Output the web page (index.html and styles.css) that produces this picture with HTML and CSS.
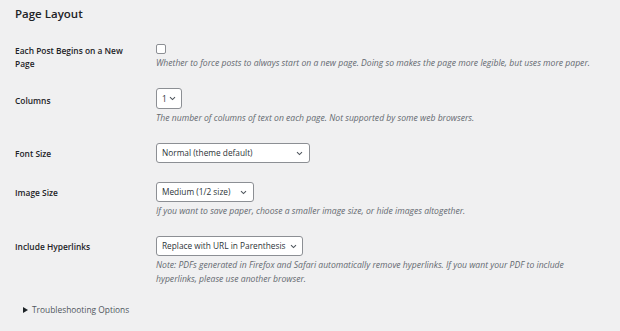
FILE: index.html
```
<!DOCTYPE html>
<html lang="en">
<head>
  <meta charset="UTF-8">
  <title>Page Layout</title>
  <link rel="stylesheet" href="styles.css">
</head>
<body>

  <h2 class="section-title">Page Layout</h2>

  <div class="form-table">
    <div class="row">
      <div class="label">Each Post Begins on a New Page</div>
      <div class="field">
        <span class="checkbox"></span>
        <p class="desc">Whether to force posts to always start on a new page. Doing so makes the page more legible, but uses more paper.</p>
      </div>
    </div>

    <div class="row columns-row">
      <div class="label">Columns</div>
      <div class="field">
        <div class="select sel-columns">
          <span>1</span>
          <svg width="7" height="5" viewBox="0 0 7 5"><path d="M1 1.2 L3.5 3.6 L6 1.2" fill="none" stroke="#50575e" stroke-width="1.1"/></svg>
        </div>
        <p class="desc">The number of columns of text on each page. Not supported by some web browsers.</p>
      </div>
    </div>

    <div class="row font-row">
      <div class="label">Font Size</div>
      <div class="field">
        <div class="select sel-font">
          <span>Normal (theme default)</span>
          <svg width="7" height="5" viewBox="0 0 7 5"><path d="M1 1.2 L3.5 3.6 L6 1.2" fill="none" stroke="#50575e" stroke-width="1.1"/></svg>
        </div>
      </div>
    </div>

    <div class="row">
      <div class="label">Image Size</div>
      <div class="field">
        <div class="select sel-image">
          <span>Medium (1/2 size)</span>
          <svg width="7" height="5" viewBox="0 0 7 5"><path d="M1 1.2 L3.5 3.6 L6 1.2" fill="none" stroke="#50575e" stroke-width="1.1"/></svg>
        </div>
        <p class="desc">If you want to save paper, choose a smaller image size, or hide images altogether.</p>
      </div>
    </div>

    <div class="row">
      <div class="label">Include Hyperlinks</div>
      <div class="field">
        <div class="select sel-links">
          <span>Replace with URL in Parenthesis</span>
          <svg width="7" height="5" viewBox="0 0 7 5"><path d="M1 1.2 L3.5 3.6 L6 1.2" fill="none" stroke="#50575e" stroke-width="1.1"/></svg>
        </div>
        <p class="desc narrow">Note: PDFs generated in Firefox and Safari automatically remove hyperlinks. If you want your PDF to include hyperlinks, please use another browser.</p>
      </div>
    </div>
  </div>

  <div class="details">
    <span class="arrow"></span>
    <span>Troubleshooting Options</span>
  </div>

</body>
</html>
```

FILE: styles.css
```
body {
  margin: 0;
  padding: 0 15px;
  background: #f0f0f1;
  font-family: "Open Sans", "Noto Sans", sans-serif;
  color: #1d2327;
  font-size: 8.4px;
  width: 590px;
  height: 331px;
  overflow: hidden;
}
.section-title {
  font-size: 11.5px;
  font-weight: 600;
  margin: 0;
  padding-top: 5px;
  line-height: 18px;
}
.form-table {
  margin-top: 12px;
}
.row {
  display: flex;
  padding: 9px 0;
}
.font-row {
  padding-bottom: 10px;
}
.label {
  width: 141px;
  flex-shrink: 0;
  font-weight: 600;
  line-height: 13px;
  padding-right: 20px;
  box-sizing: border-box;
  padding-top: 4px;
}
.row:first-child .label {
  padding-top: 0;
}
.columns-row .label {
  padding-top: 6px;
}
.field {
  flex: 1;
}
.checkbox {
  display: block;
  width: 8px;
  height: 8px;
  border: 1px solid #8c8f94;
  border-radius: 2px;
  background: #fff;
  margin-bottom: 2px;
}
.select {
  display: flex;
  align-items: center;
  justify-content: space-between;
  height: 20px;
  box-sizing: border-box;
  padding: 0 5px 0 5px;
  border: 1px solid #8c8f94;
  border-radius: 3px;
  background: #fff;
  color: #2c3338;
  font-size: 8.3px;
  line-height: 18px;
  white-space: nowrap;
}
.sel-columns {
  width: 26px;
  height: 21px;
}
.sel-font {
  width: 154px;
  padding-right: 6px;
}
.sel-image {
  width: 98px;
  padding-right: 6px;
}
.sel-links {
  width: 147px;
}
.desc {
  margin: 2px 0 0;
  font-style: italic;
  color: #646970;
  font-size: 8.6px;
  line-height: 14px;
}
.desc.narrow {
  max-width: 425px;
}
.details {
  display: flex;
  align-items: center;
  gap: 4px;
  margin-top: 9px;
  padding-left: 8px;
  color: #50575e;
  line-height: 12px;
}
.arrow {
  width: 0;
  height: 0;
  border-left: 5px solid #1d2327;
  border-top: 3px solid transparent;
  border-bottom: 3px solid transparent;
}
```
